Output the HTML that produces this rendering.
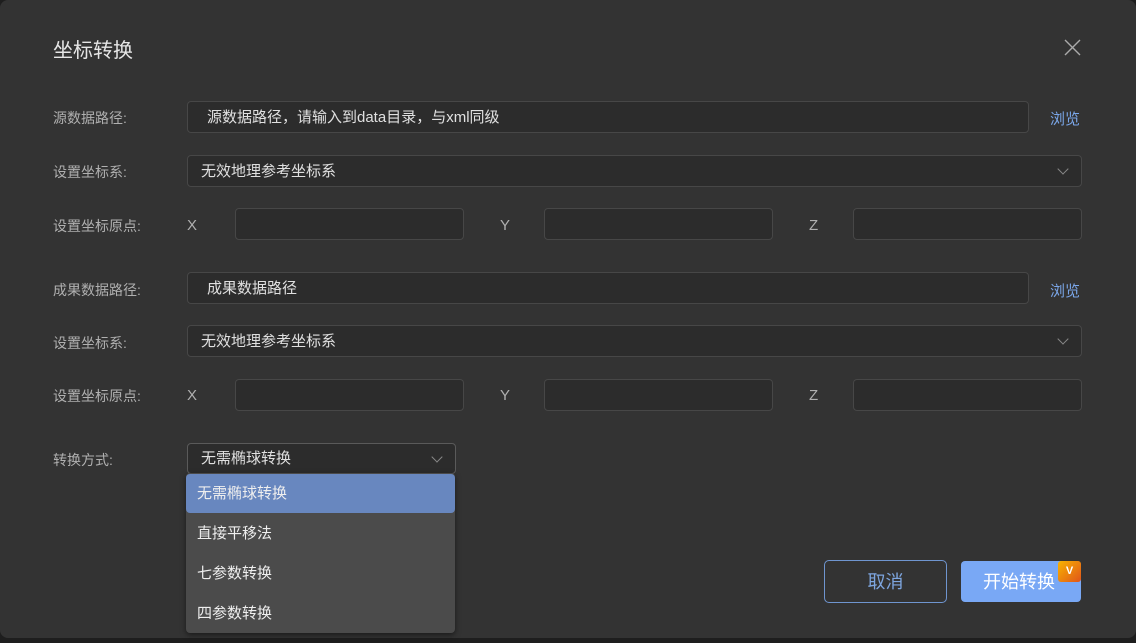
<!DOCTYPE html>
<html><head><meta charset="utf-8"><style>
*{box-sizing:border-box;margin:0;padding:0}
body{width:1136px;height:643px;background:#1e1e1e;font-family:"Liberation Sans","Noto Sans CJK SC",sans-serif;position:relative;overflow:hidden}
.dlg{position:absolute;left:0;top:0;width:1136px;height:638px;background:#333333;border-radius:8px}
.a{position:absolute}
.t{color:#e6e6e6;font-size:20px;left:53px;top:34px}
.lb{color:#b0b0b0;font-size:14px;left:53px}
.in{border:1px solid #474747;background:#2c2c2c;border-radius:4px;color:#e0e0e0;font-size:15px;line-height:31px}
.br{color:#7aa6e8;font-size:15px;left:1050px}
.xl{color:#b0b0b0;font-size:15px}
.chev{position:absolute;right:14px;top:9px;width:8px;height:8px;border-right:1px solid #888;border-bottom:1px solid #888;transform:rotate(45deg)}
.dd{left:186px;top:473px;width:269px;height:160px;background:#4b4b4b;border-radius:4px;box-shadow:0 2px 6px rgba(0,0,0,.5)}
.it{position:absolute;left:0;width:269px;height:39px;line-height:39px;padding-left:11px;color:#eee;font-size:15px}
</style></head><body>
<div class="dlg"></div>
<div class="a t">坐标转换</div>
<svg class="a" style="left:1064px;top:39px" width="17" height="17"><path d="M1 1L16 16M16 1L1 16" stroke="#aaa" stroke-width="1.4"/></svg>

<div class="a lb" style="top:108px">源数据路径:</div>
<div class="a in" style="left:187px;top:101px;width:842px;height:32px;padding-left:19px">源数据路径，请输入到data目录，与xml同级</div>
<div class="a br" style="top:108px">浏览</div>
<div class="a lb" style="top:162px">设置坐标系:</div>
<div class="a in" style="left:187px;top:155px;width:895px;height:32px;padding-left:13px">无效地理参考坐标系<span class="chev"></span></div>
<div class="a lb" style="top:216px">设置坐标原点:</div>
<div class="a xl" style="left:187px;top:217px">X</div><div class="a in" style="left:235px;top:208px;width:229px;height:32px"></div>
<div class="a xl" style="left:500px;top:217px">Y</div><div class="a in" style="left:544px;top:208px;width:229px;height:32px"></div>
<div class="a xl" style="left:809px;top:217px">Z</div><div class="a in" style="left:853px;top:208px;width:229px;height:32px"></div>

<div class="a lb" style="top:280px">成果数据路径:</div>
<div class="a in" style="left:187px;top:272px;width:842px;height:32px;padding-left:19px">成果数据路径</div>
<div class="a br" style="top:280px">浏览</div>
<div class="a lb" style="top:333px">设置坐标系:</div>
<div class="a in" style="left:187px;top:325px;width:895px;height:32px;padding-left:13px">无效地理参考坐标系<span class="chev"></span></div>
<div class="a lb" style="top:386px">设置坐标原点:</div>
<div class="a xl" style="left:187px;top:387px">X</div><div class="a in" style="left:235px;top:379px;width:229px;height:32px"></div>
<div class="a xl" style="left:500px;top:387px">Y</div><div class="a in" style="left:544px;top:379px;width:229px;height:32px"></div>
<div class="a xl" style="left:809px;top:387px">Z</div><div class="a in" style="left:853px;top:379px;width:229px;height:32px"></div>

<div class="a lb" style="top:450px">转换方式:</div>
<div class="a in" style="left:187px;top:443px;width:269px;height:31px;padding-left:13px;border-color:#5a5a5a;line-height:30px">无需椭球转换<span class="chev"></span></div>
<div class="a dd">
<div class="it" style="top:1px;background:#6887bf;border-radius:4px">无需椭球转换</div>
<div class="it" style="top:41px">直接平移法</div>
<div class="it" style="top:81px">七参数转换</div>
<div class="it" style="top:121px">四参数转换</div>
</div>

<div class="a" style="left:824px;top:560px;width:123px;height:43px;border:1.5px solid #6f95d0;border-radius:5px;color:#7ea6e0;font-size:18px;text-align:center;line-height:42px">取消</div>
<div class="a" style="left:961px;top:561px;width:120px;height:41px;background:#79a8f5;border-radius:4px;color:#fff;font-size:18px;line-height:42px;padding-left:22px">开始转换</div>
<div class="a" style="left:1058px;top:561px;width:23px;height:21px;background:linear-gradient(135deg,#f8b400,#e0541a);border-radius:3px;color:#fff;font-size:11px;font-weight:bold;text-align:center;line-height:21px">V</div>
</body></html>
